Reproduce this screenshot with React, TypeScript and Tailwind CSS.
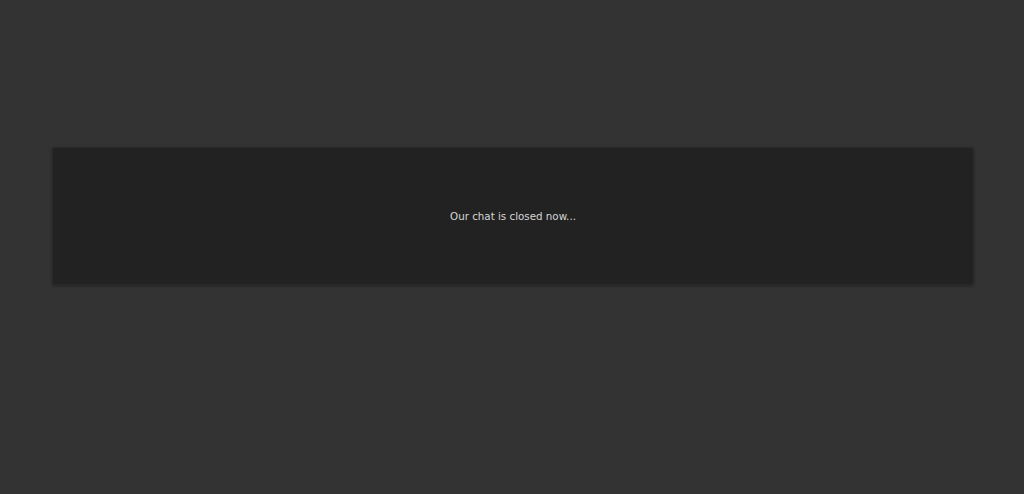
import React from 'react';

const App: React.FC = () => {
  return (
    <div className="min-h-screen w-full bg-[#333333] pt-[147px]" style={{ fontFamily: '"DejaVu Sans", sans-serif' }}>
      <div className="ml-[52px] flex h-[138px] w-[922px] items-center justify-center rounded-[3px] border border-[#2a2a2a] bg-[#222222] pt-[2px] shadow-[0_1px_3px_rgba(0,0,0,0.35)]">
        <p className="text-[10.3px] text-[#d6d6d6]">Our chat is closed now...</p>
      </div>
    </div>
  );
};

export default App;
